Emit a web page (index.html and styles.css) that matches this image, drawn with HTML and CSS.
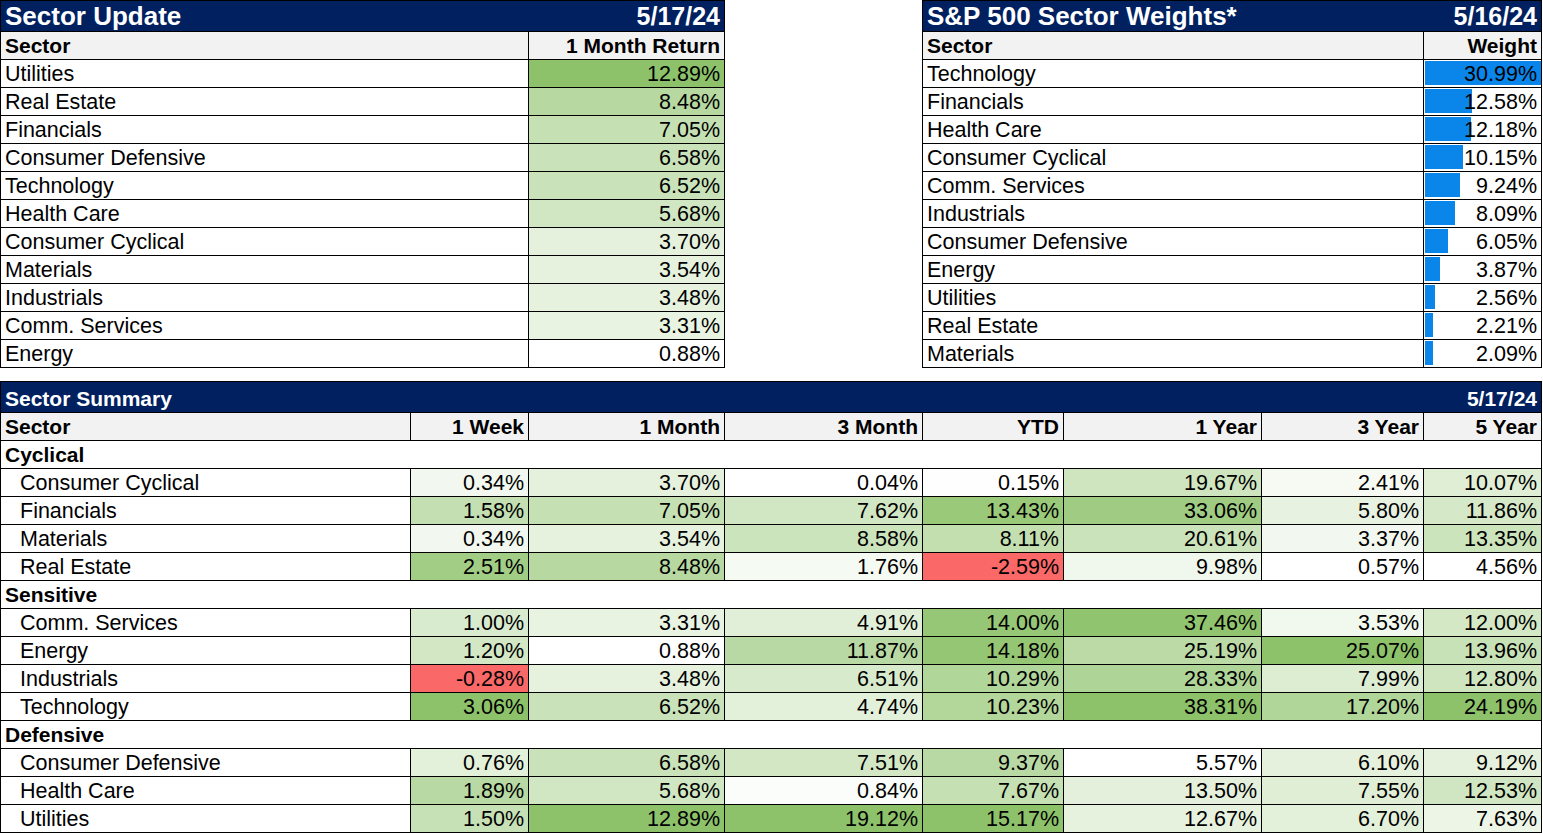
FILE: index.html
```html
<!DOCTYPE html>
<html>
<head>
<meta charset="utf-8">
<title>Sector Update</title>
<link rel="stylesheet" href="styles.css">
</head>
<body>
<div class="top">
  <div class="tbl tbl-update">
    <div class="title big"><span>Sector Update</span><span>5/17/24</span></div>
    <div class="hd">Sector</div><div class="hd num">1 Month Return</div>
    <div class="c">Utilities</div><div class="c num heat" style="--t:1">12.89%</div>
    <div class="c">Real Estate</div><div class="c num heat" style="--t:.63">8.48%</div>
    <div class="c">Financials</div><div class="c num heat" style="--t:.51">7.05%</div>
    <div class="c">Consumer Defensive</div><div class="c num heat" style="--t:.47">6.58%</div>
    <div class="c">Technology</div><div class="c num heat" style="--t:.47">6.52%</div>
    <div class="c">Health Care</div><div class="c num heat" style="--t:.40">5.68%</div>
    <div class="c">Consumer Cyclical</div><div class="c num heat" style="--t:.23">3.70%</div>
    <div class="c">Materials</div><div class="c num heat" style="--t:.22">3.54%</div>
    <div class="c">Industrials</div><div class="c num heat" style="--t:.22">3.48%</div>
    <div class="c">Comm. Services</div><div class="c num heat" style="--t:.20">3.31%</div>
    <div class="c">Energy</div><div class="c num heat" style="--t:0">0.88%</div>
  </div>

  <div class="tbl tbl-weights">
    <div class="title big"><span>S&amp;P 500 Sector Weights*</span><span>5/16/24</span></div>
    <div class="hd">Sector</div><div class="hd num">Weight</div>
    <div class="c">Technology</div><div class="c num wcell"><i class="bar" style="--w:1"></i><span>30.99%</span></div>
    <div class="c">Financials</div><div class="c num wcell"><i class="bar" style="--w:.406"></i><span>12.58%</span></div>
    <div class="c">Health Care</div><div class="c num wcell"><i class="bar" style="--w:.393"></i><span>12.18%</span></div>
    <div class="c">Consumer Cyclical</div><div class="c num wcell"><i class="bar" style="--w:.3275"></i><span>10.15%</span></div>
    <div class="c">Comm. Services</div><div class="c num wcell"><i class="bar" style="--w:.298"></i><span>9.24%</span></div>
    <div class="c">Industrials</div><div class="c num wcell"><i class="bar" style="--w:.261"></i><span>8.09%</span></div>
    <div class="c">Consumer Defensive</div><div class="c num wcell"><i class="bar" style="--w:.195"></i><span>6.05%</span></div>
    <div class="c">Energy</div><div class="c num wcell"><i class="bar" style="--w:.125"></i><span>3.87%</span></div>
    <div class="c">Utilities</div><div class="c num wcell"><i class="bar" style="--w:.0826"></i><span>2.56%</span></div>
    <div class="c">Real Estate</div><div class="c num wcell"><i class="bar" style="--w:.0713"></i><span>2.21%</span></div>
    <div class="c">Materials</div><div class="c num wcell"><i class="bar" style="--w:.0674"></i><span>2.09%</span></div>
  </div>
</div>

<div class="tbl tbl-summary">
  <div class="title"><span>Sector Summary</span><span>5/17/24</span></div>
  <div class="hd">Sector</div><div class="hd num">1 Week</div><div class="hd num">1 Month</div><div class="hd num">3 Month</div><div class="hd num">YTD</div><div class="hd num">1 Year</div><div class="hd num">3 Year</div><div class="hd num">5 Year</div>

  <div class="grp">Cyclical</div>
  <div class="c ind">Consumer Cyclical</div>
  <div class="c num heat" style="--t:.11">0.34%</div><div class="c num heat" style="--t:.23">3.70%</div><div class="c num heat" style="--t:0">0.04%</div><div class="c num heat" style="--t:.01">0.15%</div><div class="c num heat" style="--t:.43">19.67%</div><div class="c num heat" style="--t:.08">2.41%</div><div class="c num heat" style="--t:.28">10.07%</div>
  <div class="c ind">Financials</div>
  <div class="c num heat" style="--t:.52">1.58%</div><div class="c num heat" style="--t:.51">7.05%</div><div class="c num heat" style="--t:.40">7.62%</div><div class="c num heat" style="--t:.89">13.43%</div><div class="c num heat" style="--t:.84">33.06%</div><div class="c num heat" style="--t:.21">5.80%</div><div class="c num heat" style="--t:.37">11.86%</div>
  <div class="c ind">Materials</div>
  <div class="c num heat" style="--t:.11">0.34%</div><div class="c num heat" style="--t:.22">3.54%</div><div class="c num heat" style="--t:.45">8.58%</div><div class="c num heat" style="--t:.53">8.11%</div><div class="c num heat" style="--t:.46">20.61%</div><div class="c num heat" style="--t:.11">3.37%</div><div class="c num heat" style="--t:.45">13.35%</div>
  <div class="c ind">Real Estate</div>
  <div class="c num heat" style="--t:.82">2.51%</div><div class="c num heat" style="--t:.63">8.48%</div><div class="c num heat" style="--t:.09">1.76%</div><div class="c num neg">-2.59%</div><div class="c num heat" style="--t:.13">9.98%</div><div class="c num heat" style="--t:0">0.57%</div><div class="c num heat" style="--t:0">4.56%</div>

  <div class="grp">Sensitive</div>
  <div class="c ind">Comm. Services</div>
  <div class="c num heat" style="--t:.33">1.00%</div><div class="c num heat" style="--t:.20">3.31%</div><div class="c num heat" style="--t:.26">4.91%</div><div class="c num heat" style="--t:.92">14.00%</div><div class="c num heat" style="--t:.97">37.46%</div><div class="c num heat" style="--t:.12">3.53%</div><div class="c num heat" style="--t:.38">12.00%</div>
  <div class="c ind">Energy</div>
  <div class="c num heat" style="--t:.39">1.20%</div><div class="c num heat" style="--t:0">0.88%</div><div class="c num heat" style="--t:.62">11.87%</div><div class="c num heat" style="--t:.93">14.18%</div><div class="c num heat" style="--t:.60">25.19%</div><div class="c num heat" style="--t:1">25.07%</div><div class="c num heat" style="--t:.48">13.96%</div>
  <div class="c ind">Industrials</div>
  <div class="c num neg">-0.28%</div><div class="c num heat" style="--t:.22">3.48%</div><div class="c num heat" style="--t:.34">6.51%</div><div class="c num heat" style="--t:.68">10.29%</div><div class="c num heat" style="--t:.70">28.33%</div><div class="c num heat" style="--t:.30">7.99%</div><div class="c num heat" style="--t:.42">12.80%</div>
  <div class="c ind">Technology</div>
  <div class="c num heat" style="--t:1">3.06%</div><div class="c num heat" style="--t:.47">6.52%</div><div class="c num heat" style="--t:.25">4.74%</div><div class="c num heat" style="--t:.67">10.23%</div><div class="c num heat" style="--t:1">38.31%</div><div class="c num heat" style="--t:.68">17.20%</div><div class="c num heat" style="--t:1">24.19%</div>

  <div class="grp">Defensive</div>
  <div class="c ind">Consumer Defensive</div>
  <div class="c num heat" style="--t:.25">0.76%</div><div class="c num heat" style="--t:.47">6.58%</div><div class="c num heat" style="--t:.39">7.51%</div><div class="c num heat" style="--t:.62">9.37%</div><div class="c num heat" style="--t:0">5.57%</div><div class="c num heat" style="--t:.23">6.10%</div><div class="c num heat" style="--t:.23">9.12%</div>
  <div class="c ind">Health Care</div>
  <div class="c num heat" style="--t:.62">1.89%</div><div class="c num heat" style="--t:.40">5.68%</div><div class="c num heat" style="--t:.04">0.84%</div><div class="c num heat" style="--t:.51">7.67%</div><div class="c num heat" style="--t:.24">13.50%</div><div class="c num heat" style="--t:.28">7.55%</div><div class="c num heat" style="--t:.41">12.53%</div>
  <div class="c ind">Utilities</div>
  <div class="c num heat" style="--t:.49">1.50%</div><div class="c num heat" style="--t:1">12.89%</div><div class="c num heat" style="--t:1">19.12%</div><div class="c num heat" style="--t:1">15.17%</div><div class="c num heat" style="--t:.22">12.67%</div><div class="c num heat" style="--t:.25">6.70%</div><div class="c num heat" style="--t:.16">7.63%</div>
</div>
</body>
</html>
```

FILE: styles.css
```css
html, body {
  margin: 0;
  padding: 0;
  background: #ffffff;
}

body {
  font-family: "Liberation Sans", Arial, sans-serif;
  font-size: 21.5px;
  color: #000000;
  width: 1543px;
  height: 834px;
  overflow: hidden;
}

.top {
  display: flex;
  gap: 197px;
  align-items: flex-start;
}

.tbl {
  display: grid;
  gap: 1px;
  padding: 1px;
  background: #000000;
  grid-auto-rows: 27px;
}

.tbl-update {
  width: 725px;
  box-sizing: border-box;
  grid-template-columns: 527px 195px;
  grid-template-rows: 30px;
}

.tbl-weights {
  width: 620px;
  box-sizing: border-box;
  grid-template-columns: 500px 117px;
  grid-template-rows: 30px;
}

.tbl-summary {
  margin-top: 13px;
  width: 1542px;
  box-sizing: border-box;
  grid-template-columns: 409px 117px 195px 197px 140px 197px 161px 117px;
  grid-template-rows: 30px;
}

.title {
  grid-column: 1 / -1;
  background: #002060;
  color: #ffffff;
  font-weight: bold;
  font-size: 21px;
  display: flex;
  justify-content: space-between;
  align-items: center;
  padding: 3px 4px 0;
  line-height: 27px;
  white-space: nowrap;
}

.title.big {
  font-size: 26px;
  padding: 0 4px;
  line-height: 30px;
}

.title.big span:last-child {
  font-size: 25px;
}

.hd,
.c,
.grp {
  background: #ffffff;
  line-height: 27px;
  padding: 0 4px;
  white-space: nowrap;
  overflow: hidden;
}

.c {
  padding-top: 1px;
  box-sizing: border-box;
}

.hd {
  background: #f2f2f2;
  font-weight: bold;
  font-size: 21px;
}

.grp {
  grid-column: 1 / -1;
  font-weight: bold;
  font-size: 21px;
}

.num {
  text-align: right;
}

.ind {
  padding-left: 19px;
}

.heat {
  background: rgb(calc(255 - var(--t) * 114), calc(255 - var(--t) * 61), calc(255 - var(--t) * 149));
}

.neg {
  background: #fa6868;
}

.wcell {
  position: relative;
}

.wcell .bar {
  position: absolute;
  left: 1px;
  top: 1px;
  bottom: 2px;
  width: calc((100% - 1px) * var(--w));
  background: #0a86ea;
}

.wcell span {
  position: relative;
}
```
